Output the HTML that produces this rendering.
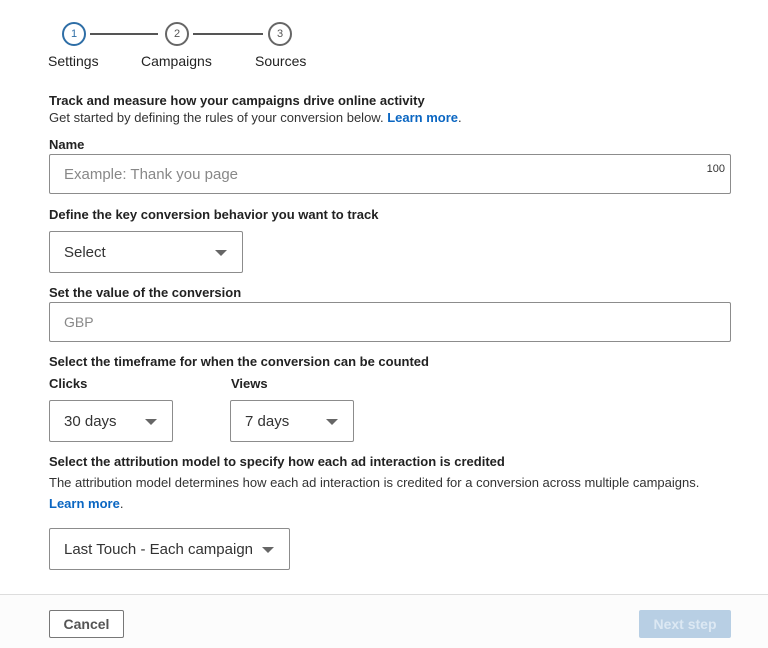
<!DOCTYPE html><html><head><style>
*{box-sizing:border-box;margin:0;padding:0}
body{width:768px;height:648px;background:#fff;font-family:"Liberation Sans",sans-serif;color:rgba(0,0,0,.9);position:relative;overflow:hidden}
.a{position:absolute}
.c{position:absolute;width:24px;height:24px;border:2px solid #666;border-radius:50%;font-size:11px;text-align:center;line-height:20px;color:#555}
.ln{position:absolute;height:2px;background:#555;top:33px}
.lbl{position:absolute;font-size:14px;top:53px;color:#222}
.h{position:absolute;left:49px;font-size:13px;font-weight:bold;color:#222}
.box{position:absolute;border:1px solid #8c8c8c;border-radius:2px;font-size:15px;color:#333;padding-left:14px;display:flex;align-items:center}
.ph{color:#888}
.tri{position:absolute;right:15px;top:18px;width:0;height:0;border-left:6px solid transparent;border-right:6px solid transparent;border-top:6px solid #666}
</style></head><body>
<div class="c" style="left:62px;top:22px;border-color:#2e6ea6;color:#2e6ea6">1</div>
<div class="ln" style="left:90px;width:68px"></div>
<div class="c" style="left:165px;top:22px">2</div>
<div class="ln" style="left:193px;width:70px"></div>
<div class="c" style="left:268px;top:22px">3</div>
<div class="lbl" style="left:48px">Settings</div>
<div class="lbl" style="left:141px">Campaigns</div>
<div class="lbl" style="left:255px">Sources</div>
<div class="h" style="top:93px">Track and measure how your campaigns drive online activity</div>
<div class="a" style="left:49px;top:110px;font-size:13px;color:#333">Get started by defining the rules of your conversion below. <span style="color:#0a66c2;font-weight:bold">Learn more</span>.</div>
<div class="h" style="top:137px">Name</div>
<div class="box" style="left:49px;top:154px;width:682px;height:40px"><span class="ph">Example: Thank you page</span><span class="a" style="right:5px;top:8px;font-size:11px;color:#333">100</span></div>
<div class="h" style="top:207px">Define the key conversion behavior you want to track</div>
<div class="box" style="left:49px;top:231px;width:194px;height:42px">Select<div class="tri"></div></div>
<div class="h" style="top:285px">Set the value of the conversion</div>
<div class="box" style="left:49px;top:302px;width:682px;height:40px"><span class="ph" style="font-size:14px">GBP</span></div>
<div class="h" style="top:354px">Select the timeframe for when the conversion can be counted</div>
<div class="h" style="top:376px">Clicks</div>
<div class="h" style="top:376px;left:231px">Views</div>
<div class="box" style="left:49px;top:400px;width:124px;height:42px">30 days<div class="tri"></div></div>
<div class="box" style="left:230px;top:400px;width:124px;height:42px">7 days<div class="tri"></div></div>
<div class="h" style="top:454px">Select the attribution model to specify how each ad interaction is credited</div>
<div class="a" style="left:49px;top:475px;font-size:13px;color:#333">The attribution model determines how each ad interaction is credited for a conversion across multiple campaigns.</div>
<div class="a" style="left:49px;top:496px;font-size:13px;color:#0a66c2;font-weight:bold">Learn more<span style="color:#333;font-weight:normal">.</span></div>
<div class="box" style="left:49px;top:528px;width:241px;height:42px">Last Touch - Each campaign<div class="tri"></div></div>
<div class="a" style="left:0;top:594px;width:768px;height:1px;background:#ddd"></div>
<div class="a" style="left:0;top:595px;width:768px;height:53px;background:#fcfcfc"></div>
<div class="a" style="left:49px;top:610px;width:75px;height:28px;border:1px solid #777;border-radius:2px;font-size:14px;font-weight:bold;color:#555;text-align:center;line-height:26px;background:#fff">Cancel</div>
<div class="a" style="left:639px;top:610px;width:92px;height:28px;background:#b8cfe4;border-radius:2px;font-size:14px;font-weight:bold;color:#dce8f3;text-align:center;line-height:28px">Next step</div>
</body></html>
